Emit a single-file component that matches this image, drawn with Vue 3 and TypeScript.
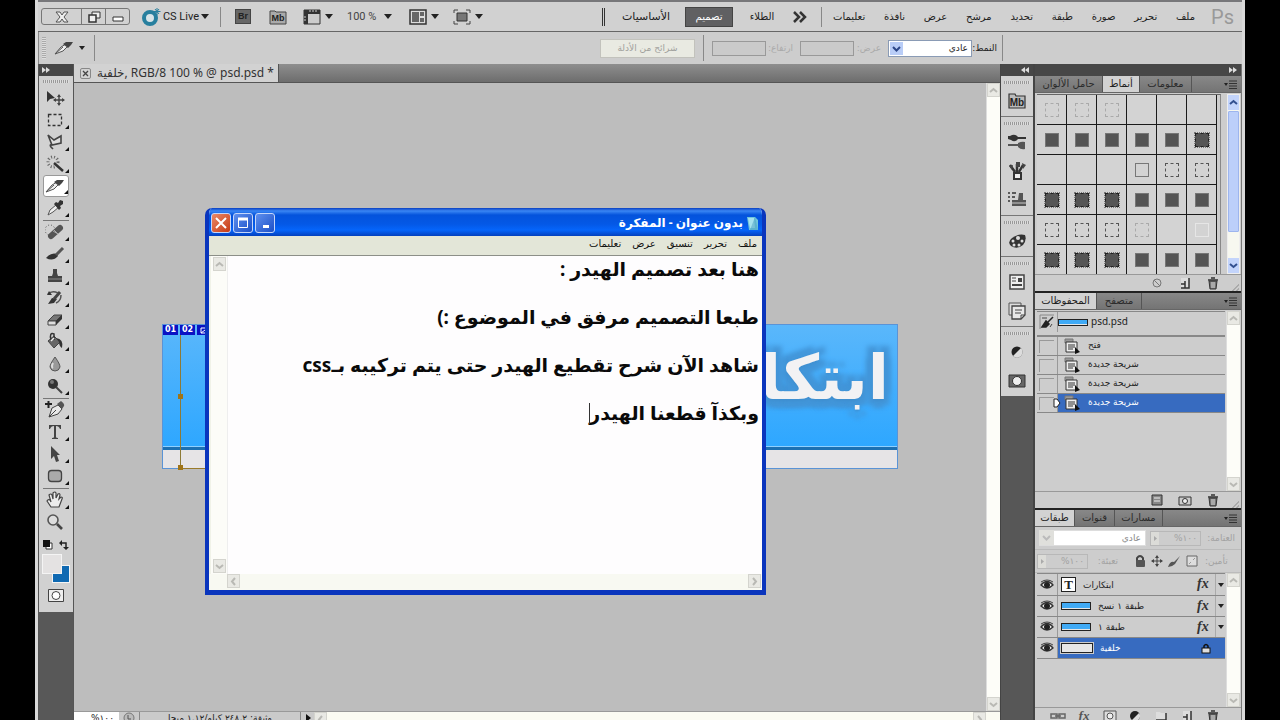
<script setup lang="ts">
import { ref } from 'vue'

interface Tool { id: string; label: string; art: string; plain?: boolean }
interface Layer { name: string; thumb: 'type' | 'blue' | 'blank'; locked?: boolean }

const menus = ['ملف', 'تحرير', 'صورة', 'طبقة', 'تحديد', 'مرشح', 'عرض', 'نافذة', 'تعليمات']
const padMenus = ['ملف', 'تحرير', 'تنسيق', 'عرض', 'تعليمات']

const slice = '<path d="M1 16 7 9 12 6 14 8 9 13Z" fill="#eee" stroke="#555"/><path d="M9 6 12 4 19 4 17 7 14 10Z" fill="#444"/><path d="M1 16 9 9" stroke="#555"/>'

const toolGroups: Tool[][] = [
  [
    { id: 'move', label: 'تحريك', plain: true, art: '<path d="M2 3V14L5 11 10 10Z" fill="#333"/><path d="M14 7v10M9 12h10" stroke="#444" stroke-width="1.4"/><path d="M14 6l2 3h-4zM14 18l2-3h-4zM8 12l3-2v4zM20 12l-3-2v4z" fill="#444"/>' },
    { id: 'marquee', label: 'تحديد مستطيل', art: '<rect x="3.500" y="4.500" width="13" height="11" fill="none" stroke="#333" stroke-dasharray="3 2" stroke-width="1.300"/>' },
    { id: 'lasso', label: 'لاسو', art: '<path d="M3 3 9 8 16 4 16 11 7 13Z" fill="#ddd" stroke="#444" stroke-width="1.600"/><path d="M7 13q-3-1-1 2l2 2" fill="none" stroke="#444" stroke-width="1.600"/>' },
    { id: 'wand', label: 'عصا سحرية', art: '<circle cx="8" cy="8" r="5" fill="none" stroke="#666" stroke-width="3" stroke-dasharray="1 2"/><path d="M9 9 18 17" stroke="#333" stroke-width="2.500"/>' },
    { id: 'slice', label: 'شريحة', art: slice },
    { id: 'eyedropper', label: 'قطارة', art: '<path d="M3 17 5 12 11 7 14 9 8 14Z" fill="#eee" stroke="#555"/><path d="M9 6 11 4 13 5 15 2 18 3 18 6 15 8 16 10 14 12Z" fill="#333"/>' },
  ],
  [
    { id: 'heal', label: 'فرشاة المعالجة', art: '<circle cx="5" cy="8" r="5" fill="none" stroke="#555" stroke-dasharray="1 2"/><path d="M6 14 15 6" stroke="#555" stroke-width="6" stroke-linecap="round"/><path d="M8 9l5 3M9 8l4 4" stroke="#aaa"/>' },
    { id: 'brush', label: 'فرشاة', art: '<path d="M1 14Q6 8 12 10L13 12Q8 18 1 14Z" fill="#333"/><path d="M11 11 18 4" stroke="#555" stroke-width="3"/>' },
    { id: 'stamp', label: 'ختم', art: '<path d="M8 3h4v4l1 3h4v6H3v-6h4l1-3z" fill="#444"/><path d="M3 13h14" stroke="#888"/>' },
    { id: 'history', label: 'فرشاة المحفوظات', art: '<path d="M3 16 7 10 12 11 9 15Z" fill="#333"/><path d="M9 11 15 4" stroke="#444" stroke-width="3"/><path d="M3 6Q7 2 13 5M11 15q5-2 5-8" fill="none" stroke="#555" stroke-width="1.500"/><path d="M2 7l2-4 3 4z" fill="#333"/>' },
    { id: 'eraser', label: 'ممحاة', art: '<path d="M3 11 9 5H17L11 11Z" fill="#777" stroke="#444"/><path d="M3 11H11V15H3Z" fill="#ddd" stroke="#444"/><path d="M11 11 17 5V9L11 15Z" fill="#333"/>' },
    { id: 'bucket', label: 'دلو الطلاء', art: '<path d="M3 9 9 4 15 10 9 16Z" fill="#666" stroke="#444"/><path d="M6 8Q4 0 9 2V8" fill="none" stroke="#333" stroke-width="1.500"/><path d="M11 6Q19 7 17 16Q14 14 14 10Z" fill="#333"/><path d="M6 9l3-3" stroke="#eee" stroke-width="1.500"/>' },
    { id: 'blur', label: 'ضبابية', art: '<path d="M10 3Q5 10 5 13Q6 17 10 17Q14 17 15 13Q15 10 10 3Z" fill="#999" stroke="#555"/><path d="M8 9Q6 13 8 14" stroke="#ddd" fill="none" stroke-width="2"/>' },
    { id: 'burn', label: 'حرق', art: '<circle cx="8" cy="8" r="5" fill="#333"/><path d="M11 11 17 17" stroke="#444" stroke-width="2"/><circle cx="7" cy="6" r="2" fill="#777"/>' },
  ],
  [
    { id: 'pen', label: 'قلم', art: '<path d="M0 4h7M3.500 1v7" stroke="#222" stroke-width="2"/><path d="M4 17 7 8 13 5 17 9 13 14Z" fill="#e8e8e8" stroke="#444"/><path d="M4 17 11 10" stroke="#444"/><path d="M12 4 16 1Q20 4 19 6L17 9Z" fill="#555"/>' },
    { id: 'type', label: 'نص', art: '<path d="M4 3H16V7H15Q14 4 11 4V15Q11 16 13 16V17H7V16Q9 16 9 15V4Q6 4 5 7H4Z" fill="#444"/>' },
    { id: 'path', label: 'تحديد المسار', art: '<path d="M6 2V15L9 12 11 18 14 17 12 11H15Z" fill="#444"/>' },
    { id: 'shape', label: 'شكل', art: '<rect x="3.500" y="4.500" width="13" height="11" rx="3" fill="#aaa" stroke="#444" stroke-width="1.300"/>' },
  ],
  [
    { id: 'hand', label: 'يد', art: '<path d="M6 17 2 11Q3 9 5 10L6 12 4 5Q6 3 7 5L8 9V3Q10 1 11 3V8L13 4Q15 3 15 5L14 9 16 7Q18 7 17 9L14 17Z" fill="#ececec" stroke="#444" stroke-width="1.200"/>' },
    { id: 'zoom', label: 'تكبير', plain: true, art: '<circle cx="8" cy="8" r="5" fill="#ddd" stroke="#555" stroke-width="1.600"/><path d="M12 12 17 17" stroke="#444" stroke-width="2.600"/>' },
  ],
]
const activeTool = ref('slice')

const dockGroups: { id: string; art: string }[][] = [
  [{ id: 'Mini Bridge', art: '<path d="M2 3H8L9 5H18V17H2Z" fill="#bbb" stroke="#333" stroke-width="1.200"/><text x="10" y="15" text-anchor="middle" font-size="10" font-weight="bold" font-family="Liberation Sans" fill="#222">Mb</text>' }],
  [
    { id: 'فرش', art: '<path d="M1 4h2q5-3 8 1h8v2h-8q-3 4-7 1L1 7z" fill="#333"/><path d="M1 12h10v2H1zM11 11q4-2 7-1v7q-4 1-7-2z" fill="#555"/>' },
    { id: 'إعدادات الفرش', art: '<path d="M7 12h7v6H7z" fill="#eee" stroke="#333" stroke-width="2"/><path d="M8 11 3 4M10 11V3M12 11 16 4" stroke="#333" stroke-width="2.500"/><path d="M2 5l4-1-1 5zM9 1h4v5H9zM15 2l4 2-3 4z" fill="#444"/>' },
    { id: 'مصدر النسخ', art: '<path d="M1 3h2M5 3h4M1 7h2M5 7h3M1 11h2" stroke="#333" stroke-width="1.500"/><path d="M12 3h4v7h3v6H5v-6h6z" fill="#555"/><path d="M5 13h14" stroke="#ccc"/>' },
  ],
  [{ id: 'ألوان', art: '<path d="M18 4Q20 9 16 14Q10 19 4 15Q0 11 5 7Q12 2 18 4Z" fill="#333"/><g fill="#ddd"><circle cx="6" cy="10" r="1.500"/><circle cx="7" cy="14" r="1.500"/><circle cx="12" cy="14" r="1.500"/><circle cx="15" cy="10" r="1.500"/><circle cx="11" cy="7" r="2"/></g>' }],
  [
    { id: 'أنماط الأحرف', art: '<path d="M3 3H17V17H3Z" fill="#eee" stroke="#444" stroke-width="1.500"/><path d="M11 6h4v4h-4z" fill="#444"/><path d="M5 6h4M5 9h4" stroke="#444"/><path d="M5 12h10v2H5z" fill="#444"/>' },
    { id: 'ملاحظات', art: '<path d="M2 2H14V14H2Z" fill="#ddd" stroke="#555"/><path d="M5 5H18V14L14 18H5Z" fill="#e8e8e8" stroke="#444" stroke-width="1.300"/><path d="M8 9h7M8 12h6M14 18v-4h4" stroke="#444"/>' },
  ],
  [
    { id: 'تعديلات', art: '<circle cx="10" cy="10" r="5.500" fill="#222"/><path d="M14 6A5.500 5.500 0 0 1 6 14Z" fill="#ddd"/>' },
    { id: 'أقنعة', art: '<path d="M2 4H18V16H2Z" fill="#666" stroke="#333"/><circle cx="10" cy="10" r="4.500" fill="#eee" stroke="#333"/>' },
  ],
]

/* s = solid, e = frayed solid, d = dashed, f = faint dashed, o = outline, w = white outline, n = empty */
const swatchRows = ['fffnnn', 'ssssse', 'nnnodd', 'eeesss', 'dddfnw', 'eeesss'].map(r => r.split(''))

const history = ['فتح', 'شريحة جديدة', 'شريحة جديدة', 'شريحة جديدة']
const layers: Layer[] = [
  { name: 'ابتكارات', thumb: 'type' },
  { name: 'طبقة ١ نسخ', thumb: 'blue' },
  { name: 'طبقة ١', thumb: 'blue' },
  { name: 'خلفية', thumb: 'blank', locked: true },
]
const note = ref('هنا بعد تصميم الهيدر :\n\nطبعا التصميم مرفق في الموضوع :)\n\nشاهد الآن شرح تقطيع الهيدر حتى يتم تركيبه بـcss\n\nوبكذآ قطعنا الهيدر')

const trash = '<path d="M3 5h10M6 3h4" stroke="#333" stroke-width="1.500"/><path d="M4 6h8l-1 8H5z" fill="#777" stroke="#333"/><path d="M7 7v6M9 7v6" stroke="#ddd"/>'
const page = '<path d="M4 3h8v10H4z" fill="#ddd"/><path d="M12 3v10H4M4 9h4v4M8 6v5" fill="none" stroke="#333" stroke-width="1.500"/>'
const stylesFoot = ['<circle cx="8" cy="8" r="4" fill="none" stroke="#777"/><path d="M5 5l6 6" stroke="#777"/>', page, trash]
const historyFoot = [
  '<path d="M3 3h10v10H3z" fill="#888" stroke="#333"/><path d="M5 6h6M5 9h6" stroke="#eee"/>',
  '<path d="M2 5h12v8H2z" fill="#ccc" stroke="#333"/><circle cx="8" cy="9" r="2.500" fill="#eee" stroke="#333"/>',
  trash,
]
const layersFoot = [
  '<path d="M1 6h6v4H1zM9 6h6v4H9zM5 8h6" fill="none" stroke="#666" stroke-width="1.500"/>',
  '<text x="8" y="12" text-anchor="middle" font-size="13" font-style="italic" font-weight="bold" font-family="Liberation Serif" fill="#555">fx</text>',
  '<path d="M2 3h12v10H2z" fill="#ddd" stroke="#555"/><circle cx="8" cy="8" r="3" fill="#eee" stroke="#555"/>',
  '<circle cx="8" cy="8" r="5" fill="#222"/><path d="M12 5A5 5 0 0 1 5 12Z" fill="#ddd"/>',
  '<path d="M3 4h4l1 1h5v7H3z" fill="#ddd"/><path d="M13 5v7H3" fill="none" stroke="#333" stroke-width="1.500"/>',
  page,
  trash,
]
</script>

<template>
  <div class="app">
    <header class="menubar">
      <div class="winbtns">
        <button class="wb wide" aria-label="إغلاق"><svg width="14" height="12" viewBox="0 0 14 12"><path d="M1 1h4l2 3 2-3h4L9 6l4 5H9L7 8l-2 3H1l4-5z" fill="#eee" stroke="#555" /></svg></button>
        <button class="wb" aria-label="استعادة"><svg width="14" height="12" viewBox="0 0 14 12"><path d="M5 1h8v6H5z" fill="#eee" stroke="#333" /><path d="M2 4h7v7H2z" fill="#eee" stroke="#333" stroke-width="1.500" /></svg></button>
        <button class="wb" aria-label="تصغير"><svg width="14" height="12" viewBox="0 0 14 12"><path d="M2 6h10v4H2z" fill="#fff" stroke="#333" /></svg></button>
      </div>
      <button class="flat cslive">
        <svg width="20" height="20" viewBox="0 0 20 20"><circle cx="9" cy="11" r="6" fill="#d8e4e8" stroke="#277f9e" stroke-width="4" /><path d="M16 1v7M12.500 4.500h7M14 2l4 5M18 2l-4 5" stroke="#277f9e" /></svg>
        <span>CS Live</span><i class="tri" />
      </button>
      <i class="vsep" />
      <button class="flat br" aria-label="Bridge"><span>Br</span></button>
      <button class="flat mb" aria-label="Mini Bridge"><svg width="18" height="16" viewBox="0 0 18 16"><path d="M1 2h5l1 1h10v12H1z" fill="#aaa" stroke="#444" /><text x="9" y="12" text-anchor="middle" font-size="9" font-weight="bold" font-family="Liberation Sans" fill="#222">Mb</text></svg></button>
      <button class="flat pair" aria-label="عرض الإضافات"><svg width="18" height="16" viewBox="0 0 18 16"><path d="M1 1h16v14H1z" fill="#ccc" stroke="#333" /><path d="M1 1h16v4H5v10H1z" fill="#333" /><path d="M7 1v2M10 1v2M13 1v2M1 8h2M1 11h2" stroke="#ccc" /></svg><i class="tri" /></button>
      <button class="flat pair zoomval"><span dir="ltr">100 %</span><i class="tri" /></button>
      <button class="flat pair" aria-label="ترتيب المستندات"><svg width="18" height="16" viewBox="0 0 18 16"><path d="M1 1h16v14H1z" fill="#ddd" stroke="#333" stroke-width="1.500" /><path d="M3 3h7v10H3zM11 3h4v4h-4zM11 9h4v4h-4z" fill="#666" /></svg><i class="tri" /></button>
      <button class="flat pair last" aria-label="وضع الشاشة"><svg width="18" height="16" viewBox="0 0 18 16"><path d="M4 4h10v8H4z" fill="#777" stroke="#333" /><path d="M1 4V1h4M13 1h4v3M17 12v3h-4M5 15H1v-3" fill="none" stroke="#444" /></svg><i class="tri" /></button>
      <span class="grow" />
      <i class="dsep" />
      <nav class="spaces" dir="rtl">
        <button class="flat more" aria-label="المزيد"><svg width="14" height="12" viewBox="0 0 14 12"><path d="M1 1l5 5-5 5M7 1l5 5-5 5" fill="none" stroke="#333" stroke-width="2.500" /></svg></button>
        <button class="flat">الطلاء</button>
        <button class="flat on">تصميم</button>
        <button class="flat">الأساسيات</button>
      </nav>
      <i class="vsep" />
      <nav class="menus" dir="rtl"><button v-for="m in menus" :key="m" class="flat">{{ m }}</button></nav>
      <span class="ps">Ps</span>
    </header>

    <section class="options">
      <i class="grip-v" />
      <button class="flat cur" aria-label="أداة الشريحة"><svg width="20" height="20" viewBox="0 0 20 20"><g fill="none" v-html="toolGroups[0][4].art" /></svg><i class="tri small" /></button>
      <i class="vline" />
      <span class="grow" />
      <button class="guides" disabled>شرائح من الأدلة</button>
      <i class="vline" />
      <div class="field"><input id="opt-h" type="text" disabled><label for="opt-h" dir="rtl">ارتفاع:</label></div>
      <div class="field"><input id="opt-w" type="text" disabled><label for="opt-w" dir="rtl">عرض:</label></div>
      <div class="mode">
        <div class="combo">
          <select id="opt-mode" dir="rtl"><option>عادي</option></select>
          <svg class="chev" width="13" height="13" viewBox="0 0 13 13"><rect width="13" height="13" fill="#b9cdf7" /><path d="M3 5l3.500 3.500L10 5" fill="none" stroke="#2c4688" stroke-width="2" /></svg>
        </div>
        <label for="opt-mode" dir="rtl">النمط:</label>
      </div>
      <i class="vline" />
    </section>

    <main class="body">
      <aside class="tools">
        <div class="cap"><svg width="8" height="6" viewBox="0 0 8 6"><path d="M0 0l4 3-4 3zM4 0l4 3-4 3z" fill="#ddd" /></svg></div>
        <div class="toolbox">
          <i class="grip" />
          <div v-for="(g, gi) in toolGroups" :key="gi" class="tgroup">
            <button v-for="t in g" :key="t.id" class="tool" :class="{ active: activeTool === t.id, plain: t.plain }" :aria-label="t.label" @click="activeTool = t.id">
              <svg width="20" height="20" viewBox="0 0 20 20"><g fill="none" v-html="t.art" /></svg>
            </button>
          </div>
          <div class="minis">
            <svg width="10" height="10" viewBox="0 0 10 10"><path d="M3 3h6v6H3z" fill="#fff" stroke="#333" /><path d="M0 0h7v7H0z" fill="#111" /></svg>
            <svg width="10" height="10" viewBox="0 0 10 10"><path d="M2 3h5v5" fill="none" stroke="#222" stroke-width="1.500" /><path d="M0 3l3-3v6zM7 10L4 7h6z" fill="#222" /></svg>
          </div>
          <div class="colors"><i class="bgc" /><i class="fgc" /></div>
          <button class="qm" aria-label="قناع سريع"><svg width="16" height="13" viewBox="0 0 16 13"><path d="M.500 .500h15v12H.500z" fill="#eee" stroke="#444" /><circle cx="8" cy="6.500" r="4" fill="#fff" stroke="#444" /></svg></button>
        </div>
      </aside>

      <section class="doc">
        <div class="doctabs">
          <div class="doctab">
            <button class="tabx" aria-label="إغلاق"><svg width="9" height="9" viewBox="0 0 9 9"><path d="M2 2l5 5M7 2L2 7" stroke="#444" stroke-width="1.300" /></svg></button>
            <span>خلفية, RGB/8 100 % @ psd.psd *</span>
          </div>
        </div>
        <div class="stage">
          <div class="canvas">
            <div class="banner">
              <div class="sky"><span class="logo">ابتكارات</span></div>
              <div class="strip" />
              <i class="sl-line" /><i class="sl-bottom" /><i class="sl-k k1" /><i class="sl-k k2" />
              <div class="badges"><b>01</b><b>02</b><b><svg width="9" height="7" viewBox="0 0 9 7"><path d="M1 1h7v5H1zM1 6l4-3 3 2" fill="none" stroke="#fff" /></svg></b></div>
            </div>

            <div class="pad">
              <div class="padtitle">
                <button class="xp x" aria-label="إغلاق"><svg width="14" height="14" viewBox="0 0 14 14"><path d="M2 2l10 10M12 2L2 12" stroke="#fff" stroke-width="2" /></svg></button>
                <button class="xp" aria-label="تكبير"><svg width="12" height="12" viewBox="0 0 12 12"><path d="M1.500 2h9v8.500h-9z" fill="none" stroke="#fff" /><path d="M1 2h10" stroke="#fff" stroke-width="3" /></svg></button>
                <button class="xp" aria-label="تصغير"><svg width="12" height="12" viewBox="0 0 12 12"><path d="M4 9.500h6" stroke="#fff" stroke-width="3" /></svg></button>
                <h1 dir="rtl">بدون عنوان - المفكرة</h1>
                <svg width="13" height="15" viewBox="0 0 13 15"><path d="M1 1h8l3 3v10H3z" fill="#6fc5dc" /><path d="M2 2h6l1 10H4z" fill="#a6e2ee" /><path d="M9 1l3 13H4z" fill="#4a9fc0" opacity=".5" /></svg>
              </div>
              <nav class="padmenu" dir="rtl"><button v-for="m in padMenus" :key="m" class="flat">{{ m }}</button></nav>
              <div class="padbody">
                <div class="padv">
                  <i class="sbtn"><svg width="9" height="9" viewBox="0 0 9 9"><path d="M1 6l3.500-3L8 6" /></svg></i>
                  <i class="sbtn"><svg width="9" height="9" viewBox="0 0 9 9"><path d="M1 3l3.500 3L8 3" /></svg></i>
                </div>
                <div class="edit">
                  <textarea v-model="note" dir="rtl" aria-label="نص المفكرة" spellcheck="false" />
                  <i class="caret" />
                </div>
              </div>
              <div class="padh">
                <i class="sbtn"><svg width="9" height="9" viewBox="0 0 9 9"><path d="M6 1L3 4.500 6 8" /></svg></i>
                <i class="sbtn"><svg width="9" height="9" viewBox="0 0 9 9"><path d="M3 1l3 3.500L3 8" /></svg></i>
              </div>
            </div>
          </div>
          <div class="vscroll">
            <i class="sbtn"><svg width="9" height="9" viewBox="0 0 9 9"><path d="M1 6l3.500-3L8 6" /></svg></i>
            <i class="sbtn"><svg width="9" height="9" viewBox="0 0 9 9"><path d="M1 3l3.500 3L8 3" /></svg></i>
          </div>
        </div>
        <footer class="status">
          <span class="pct">%١٠٠</span>
          <i class="clock"><svg width="12" height="12" viewBox="0 0 12 12"><circle cx="6" cy="6" r="5" fill="#bbb" stroke="#777" /><path d="M5 3v4h3" fill="none" stroke="#555" /></svg></i>
          <span class="info" dir="rtl">وثيقة: ٢٤٨,٢ كيلو/١,١٢ ميجا</span>
          <i class="play"><svg width="6" height="8" viewBox="0 0 6 8"><path d="M1 0l5 4-5 4z" fill="#111" /></svg></i>
          <span class="hs"><i class="sbtn"><svg width="9" height="9" viewBox="0 0 9 9"><path d="M6 1L3 4.500 6 8" /></svg></i><i class="sbtn"><svg width="9" height="9" viewBox="0 0 9 9"><path d="M3 1l3 3.500L3 8" /></svg></i></span>
        </footer>
      </section>

      <aside class="dock">
        <div class="cap end"><svg width="8" height="6" viewBox="0 0 8 6"><path d="M4 0L0 3l4 3zM8 0L4 3l4 3z" fill="#ddd" /></svg></div>
        <div v-for="(g, gi) in dockGroups" :key="gi" class="dgroup">
          <i class="grip" />
          <button v-for="d in g" :key="d.id" class="flat" :aria-label="d.id"><svg width="20" height="20" viewBox="0 0 20 20"><g fill="none" v-html="d.art" /></svg></button>
        </div>
      </aside>

      <aside class="panels">
        <div class="cap end"><svg width="8" height="6" viewBox="0 0 8 6"><path d="M0 0l4 3-4 3zM4 0l4 3-4 3z" fill="#ddd" /></svg></div>

        <section class="panel styles">
          <div class="ptabs">
            <button>حامل الألوان</button><button class="on">أنماط</button><button>معلومات</button>
            <span class="grow" /><svg class="pm" width="13" height="9" viewBox="0 0 13 9"><path d="M0 3h4L2 6z" fill="#222" /><path d="M5 1h8M5 3.500h8M5 6h8M5 8.500h8" stroke="#333" /></svg>
          </div>
          <div class="pmain">
            <div class="grid">
              <template v-for="(row, r) in swatchRows" :key="r"><span v-for="(k, c) in row" :key="c" class="cell"><i :class="'sw ' + k" /></span></template>
            </div>
            <div class="bscroll">
              <i><svg width="9" height="9" viewBox="0 0 9 9"><path d="M1 6l3.500-3L8 6" /></svg></i>
              <b />
              <i><svg width="9" height="9" viewBox="0 0 9 9"><path d="M1 3l3.500 3L8 3" /></svg></i>
            </div>
          </div>
          <div class="pfoot"><svg v-for="(a, i) in stylesFoot" :key="i" width="16" height="16" viewBox="0 0 16 16"><g v-html="a" /></svg><i class="sizer" /></div>
        </section>

        <section class="panel hist">
          <div class="ptabs">
            <button class="on">المحفوظات</button><button>متصفح</button>
            <span class="grow" /><svg class="pm" width="13" height="9" viewBox="0 0 13 9"><path d="M0 3h4L2 6z" fill="#222" /><path d="M5 1h8M5 3.500h8M5 6h8M5 8.500h8" stroke="#333" /></svg>
          </div>
          <div class="pmain">
            <div class="list">
              <div class="snap">
                <span class="chk"><svg width="16" height="16" viewBox="0 0 16 16"><path d="M1 15V1h14" fill="none" stroke="#888" /><path d="M3 13l4-6 3 3-3 3zM9 8l5-5" fill="#222" stroke="#222" stroke-width="1.500" /><path d="M3 4h5M11 13l2-3" stroke="#444" /></svg></span>
                <i class="thumb" /><span>psd.psd</span>
              </div>
              <div v-for="(h, i) in history" :key="i" class="hrow" :class="{ sel: i === 3 }">
                <span class="chk"><i /><svg v-if="i === 3" class="mark" width="8" height="10" viewBox="0 0 8 10"><path d="M1 1h3l3 4-3 4H1z" fill="#fff" stroke="#222" /></svg></span>
                <span class="hname">
                  <svg width="16" height="16" viewBox="0 0 16 16"><path d="M1 1h8v4H1z" fill="#999" stroke="#777" /><path d="M2 4h11v10H2z" fill="#eee" stroke="#333" /><path d="M4 7h7M4 9h7M4 11h5" stroke="#333" /><path d="M11 9v7l5-2z" fill="#111" /></svg>
                  <span>{{ h }}</span>
                </span>
              </div>
            </div>
            <div class="vscroll">
              <i class="sbtn"><svg width="9" height="9" viewBox="0 0 9 9"><path d="M1 6l3.500-3L8 6" /></svg></i>
              <i class="sbtn"><svg width="9" height="9" viewBox="0 0 9 9"><path d="M1 3l3.500 3L8 3" /></svg></i>
            </div>
          </div>
          <div class="pfoot"><svg v-for="(a, i) in historyFoot" :key="i" width="16" height="16" viewBox="0 0 16 16"><g v-html="a" /></svg><i class="sizer" /></div>
        </section>

        <section class="panel lay">
          <div class="ptabs">
            <button class="on">طبقات</button><button>قنوات</button><button>مسارات</button>
            <span class="grow" /><svg class="pm" width="13" height="9" viewBox="0 0 13 9"><path d="M0 3h4L2 6z" fill="#222" /><path d="M5 1h8M5 3.500h8M5 6h8M5 8.500h8" stroke="#333" /></svg>
          </div>
          <div class="lrow blendrow">
            <div class="combo">
              <select aria-label="وضع المزج" dir="rtl" disabled><option>عادي</option></select>
              <svg class="chev" width="15" height="15" viewBox="0 0 15 15"><rect width="15" height="15" fill="#e0e0dc" /><path d="M4 6l3.500 3.500L11 6" fill="none" stroke="#bbb" stroke-width="2" /></svg>
            </div>
            <span class="num"><i><svg width="8" height="13" viewBox="0 0 8 13"><path d="M3 4v5l3-2.500z" fill="#aaa" /></svg></i><input id="opac" type="text" value="%١٠٠" disabled></span><label for="opac" dir="rtl">العتامة:</label>
          </div>
          <div class="lrow lockrow">
            <span class="num"><i><svg width="8" height="13" viewBox="0 0 8 13"><path d="M3 4v5l3-2.500z" fill="#aaa" /></svg></i><input id="fill" type="text" value="%١٠٠" disabled></span><label for="fill" dir="rtl">تعبئة:</label>
            <svg width="66" height="14" viewBox="0 0 66 14"><path d="M3 7V4q3-4 6 0v3" fill="none" stroke="#444" stroke-width="2" /><rect x="2" y="6" width="9" height="7" rx="1" fill="#555" /><path d="M23 2v10M18 7h10" stroke="#444" /><path d="M23 1l2 3h-4zM23 13l2-3h-4zM17 7l3-2v4zM29 7l-3-2v4z" fill="#444" /><path d="M34 13q2-6 6-5l6-6-5 8q-3 3-7 3z" fill="#555" /><path d="M53 2h10v10H53z" fill="#ddd" stroke="#666" /><path d="M55 10l2-2M59 6l2-2" stroke="#999" /></svg>
            <span class="lk" dir="rtl">تأمين:</span>
          </div>
          <div class="pmain">
            <div class="list">
              <div v-for="l in layers" :key="l.name" class="layer" :class="{ sel: l.locked }">
                <button class="eye" aria-label="إظهار"><svg width="14" height="12" viewBox="0 0 14 12"><path d="M1 6q6-7 12 0-6 6-12 0z" fill="#eee" stroke="#333" stroke-width="1.300" /><circle cx="7" cy="6" r="3" fill="#222" /><path d="M1 3q6-4 12 0" fill="none" stroke="#444" /></svg></button>
                <span class="lname">
                  <b v-if="l.thumb === 'type'" class="tt">T</b><i v-else class="thumb" :class="l.thumb" />
                  <span>{{ l.name }}</span>
                </span>
                <svg v-if="l.locked" class="lock" width="10" height="11" viewBox="0 0 10 11"><path d="M3 5V3q2-3 4 0v2" fill="none" stroke="#111" stroke-width="1.500" /><rect x="1" y="5" width="8" height="5" fill="#ddd" stroke="#111" /></svg>
                <template v-else><em>fx</em><span class="drop"><i class="tri small" /></span></template>
              </div>
            </div>
            <div class="vscroll">
              <i class="sbtn"><svg width="9" height="9" viewBox="0 0 9 9"><path d="M1 6l3.500-3L8 6" /></svg></i>
              <i class="sbtn"><svg width="9" height="9" viewBox="0 0 9 9"><path d="M1 3l3.500 3L8 3" /></svg></i>
            </div>
          </div>
          <div class="pfoot wide"><svg v-for="(a, i) in layersFoot" :key="i" width="16" height="16" viewBox="0 0 16 16"><g v-html="a" /></svg></div>
        </section>
      </aside>
    </main>
  </div>
</template>

<style>
html, body { background: #000; }
</style>

<style scoped>
* { box-sizing: border-box; }
.app { height: 100vh; margin: 0 35px; border: solid #d9d9d9; border-width: 0 3px; background: #cfcfcf; display: flex; flex-direction: column; overflow: hidden; font: 10px/14px "DejaVu Sans", sans-serif; color: #222; }
button, input, select, textarea { font: inherit; color: inherit; margin: 0; padding: 0; border: 0; background: none; border-radius: 0; }
svg { display: block; flex: none; }
i { display: block; font-style: normal; }
.flat { display: flex; align-items: center; justify-content: center; white-space: nowrap; }
.grow { flex: 1; }
.tri { border: solid transparent; border-width: 5px 4px 0; border-top-color: #222; }
.tri.small { border-width: 4px 3px 0; border-top-color: #222; }

.menubar { flex: none; height: 32px; display: flex; align-items: center; padding: 0 8px 0 3px; border-top: 2px solid #77777a; border-bottom: 1px solid #666; background: #d1d1d1; }
.winbtns { display: flex; border: 1px solid #777; border-radius: 3px; height: 17px; margin-right: 12px; }
.wb { width: 24px; display: flex; align-items: center; justify-content: center; border-left: 1px solid #777; }
.wb.wide { width: 39px; border-left: 0; }
.cslive { gap: 2px; font: 11px/16px Roboto, sans-serif; margin-right: 12px; width: 66px; }
.vsep { width: 1px; height: 20px; background: #888; }
.br { margin-left: 14px; }
.br span { width: 16px; height: 15px; background: #666; border: 1px solid #444; font: bold 9px/13px "Liberation Sans", sans-serif; text-align: center; }
.mb { margin: 0 16px 0 18px; }
.pair { gap: 4px; margin-right: 14px; }
.pair.zoomval { font: 11px/16px Roboto, sans-serif; color: #444; margin-right: 17px; gap: 8px; }
.pair.last { margin-right: 0; }
.dsep { width: 3px; height: 18px; border: solid #333; border-width: 0 1px; margin-right: 12px; }
.spaces { display: flex; align-items: center; margin-right: 14px; }
.spaces .flat { height: 20px; width: 48px; justify-content: center; }
.spaces .flat.more { width: 21px; justify-content: flex-start; }
.spaces .flat.on { background: #606062; color: #fff; border: 1px solid #444; margin: 0 5px 0 10px; }
.spaces .flat:last-child { width: 58px; font-size: 11px; }
.menus { display: flex; align-items: center; justify-content: space-between; width: 373px; padding-left: 11px; }
.ps { width: 39px; text-align: right; font: 20px/24px Roboto, "Liberation Sans", sans-serif; color: #999; }

.options { flex: none; height: 32px; display: flex; align-items: center; background: #cdcdcd; border-left: 1px solid #888; padding-right: 239px; }
.grip-v { width: 4px; height: 22px; margin-left: 3px; background: repeating-linear-gradient(#aaa 0 1px, #ddd 1px 2px); }
.cur { gap: 5px; margin: 0 9px 0 8px; }
.vline { width: 1px; height: 26px; background: #888; }
.guides { width: 95px; height: 19px; background: #e9eae2; border: 1px solid #c2c2bc; color: #a0a09c; margin-right: 8px; font-size: 9px; white-space: nowrap; }
.field { display: flex; align-items: center; margin-left: 7px; color: #aaa; }
.field input { width: 54px; height: 15px; border: 1px solid #999; background: #cacaca; }
.field label { width: 27px; font-size: 9px; white-space: nowrap; }
.vline + .field { margin-left: 8px; }
.mode { display: flex; align-items: center; margin-left: 7px; }
.mode label { width: 30px; padding-right: 5px; white-space: nowrap; font-size: 9px; }
.combo { position: relative; display: flex; }
.combo select { appearance: none; width: 84px; height: 17px; background: #fff; border: 1px solid #8a9bb5; padding: 0 3px; font-size: 9px; line-height: 13px; }
.combo .chev { position: absolute; left: 2px; top: 2px; pointer-events: none; }

.body { flex: 1; min-height: 0; display: flex; background: #575757; }
.cap { flex: none; height: 12px; background: #474747; padding: 3px 3px 0; display: flex; }
.cap.end { justify-content: flex-end; padding-right: 4px; }
.tools { flex: none; width: 36px; border: solid #555; border-width: 0 1px; background: #585858; }
.toolbox { background: #d1d1d1; display: flex; flex-direction: column; align-items: center; padding: 4px 0 10px; }
.grip { width: 26px; height: 3px; background: repeating-linear-gradient(90deg, #999 0 1px, #ddd 1px 2px); }
.toolbox > .grip { margin-bottom: 4px; }
.tgroup + .tgroup { border-top: 1px solid #777; margin-top: 1px; }
.tgroup { width: 26px; }
.tool { position: relative; width: 26px; height: 22px; display: flex; align-items: center; padding-left: 2px; }
.tool::after { content: ""; position: absolute; right: 0; bottom: 2px; border: solid transparent; border-width: 0 0 4px 4px; border-bottom-color: #111; }
.tool.plain::after { display: none; }
.tool.active { background: #fff; border: 1px solid #999; border-radius: 3px; padding-left: 1px; }
.minis { width: 26px; display: flex; justify-content: space-between; margin: 7px 0 4px; }
.colors { position: relative; width: 28px; height: 30px; }
.colors i { position: absolute; border: 1px solid #f4f4f4; width: 18px; height: 18px; }
.colors .fgc { left: 0; top: 0; background: #e4e2e2; width: 20px; height: 20px; }
.colors .bgc { right: 0; bottom: 1px; background: #0f69b2; }
.qm { margin-top: 5px; }

.doc { flex: 1; min-width: 0; display: flex; flex-direction: column; background: #bdbdbd; }
.doctabs { flex: none; height: 19px; display: flex; background: linear-gradient(#8e8e8e, #6d6d6d); border-bottom: 1px solid #555; }
.doctab { display: flex; align-items: center; gap: 6px; padding: 0 4px 0 6px; background: #d2d2d2; border-right: 1px solid #555; font: 12px/16px "Noto Sans", "DejaVu Sans", sans-serif; color: #333; white-space: nowrap; }
.tabx { width: 11px; height: 11px; border: 1px solid #888; border-radius: 2px; }
.stage { flex: 1; min-height: 0; display: flex; }
.canvas { position: relative; flex: 1; min-width: 0; overflow: hidden; }
.vscroll { flex: none; width: 14px; background: #fdfdf8; display: flex; flex-direction: column; justify-content: space-between; border-left: 1px solid #ddd; }
.sbtn { width: 13px; height: 14px; display: grid; place-items: center; background: #e9e9e4; border: 1px solid #d4d4ce; }
.sbtn path { fill: none; stroke: #b9b9b4; stroke-width: 2; }
.status { flex: none; height: 9px; overflow: hidden; display: flex; align-items: flex-start; background: #cacaca; font-size: 9px; line-height: 12px; border-top: 1px solid #999; }
.pct { width: 45px; background: #fff; text-align: right; padding-right: 5px; }
.clock { width: 20px; padding-left: 4px; }
.info { width: 162px; border: solid #888; border-width: 0 1px; text-align: center; white-space: nowrap; }
.play { width: 13px; padding: 2px 0 0 4px; }
.hs { flex: 1; display: flex; justify-content: space-between; background: #fbfbf2; padding-right: 14px; }

.banner { position: absolute; left: 88px; top: 241px; width: 736px; height: 145px; border: 1px solid #5a93d6; display: flex; flex-direction: column; background: #e6e4e6; }
.sky { position: relative; height: 122px; background: linear-gradient(#5ab7fb, #2ea7ff); overflow: hidden; display: flex; justify-content: flex-end; padding-right: 8px; border-bottom: 1px solid #8fd0ff; }
.strip { height: 3px; background: #1c70b2; }
.logo { direction: rtl; font: bold 62px/106px "DejaVu Sans", sans-serif; color: #f2f2f4; text-shadow: 0 2px 3px #3f8fd0, 6px 6px 5px #4396d9, -6px 6px 5px #4396d9, 6px -6px 5px #4396d9, -6px -6px 5px #4396d9, 0 9px 5px #4396d9; white-space: nowrap; }
.badges { position: absolute; left: 0; top: 0; display: flex; gap: 2px; }
.badges b { background: #0a12c4; color: #fff; font: bold 8px/10px "DejaVu Sans", sans-serif; width: 15px; height: 10px; display: grid; place-items: center; }
.sl-line { position: absolute; left: 17px; top: 0; bottom: 0; width: 1px; background: #8d7a36; }
.sl-bottom { position: absolute; left: 17px; right: 500px; bottom: -1px; height: 1px; background: #9a7a2a; }
.sl-k { position: absolute; left: 15px; width: 5px; height: 5px; background: #a07417; }
.k1 { top: 69px; }
.k2 { bottom: -2px; }

.pad { position: absolute; left: 131px; top: 125px; width: 561px; height: 387px; border: solid #0a35bd; border-width: 0 4px 5px; border-radius: 7px 7px 0 0; background: #fefdfe; display: flex; flex-direction: column; overflow: hidden; }
.padtitle { flex: none; height: 28px; margin: 0 -4px; padding: 2px 7px 0 6px; display: flex; align-items: center; gap: 2px; background: linear-gradient(#0a3fc0, #3a86f4 3px, #0453dc 7px, #0458e6 16px, #0565fb 22px, #0340bd); }
.xp { width: 20px; height: 20px; border: 1px solid #c4d6fa; border-radius: 3px; background: linear-gradient(135deg, #5f90ee, #1b4fc8); display: grid; place-items: center; }
.xp.x { background: linear-gradient(135deg, #ea8a68, #c63a14); }
.padtitle h1 { flex: 1; margin: 0; font: bold 12px/16px "Noto Sans", "DejaVu Sans", sans-serif; color: #fff; padding-right: 1px; }
.padmenu { flex: none; height: 20px; display: flex; gap: 11px; padding: 0 5px 3px; background: #e3e6d8; border-bottom: 1px solid #8c8f88; color: #111; }
.padbody { flex: 1; min-height: 0; display: flex; }
.padv { flex: none; width: 19px; padding: 1px 1px 1px 2px; background: #fcfcf8; border-left: 2px solid #f0f2e8; border-right: 1px solid #eee; display: flex; flex-direction: column; justify-content: space-between; }
.edit { position: relative; flex: 1; }
.edit textarea { display: block; width: 100%; height: 100%; resize: none; outline: 0; overflow: hidden; padding: 1px 3px; font: bold 19px/24px "Noto Sans", "DejaVu Sans", sans-serif; color: #0a0a0a; white-space: pre; }
.caret { position: absolute; right: 172px; top: 147px; width: 1px; height: 21px; background: #333; }
.padh { flex: none; height: 16px; display: flex; justify-content: space-between; padding: 0 1px 0 18px; background: #f8f9f2; }

.dock { flex: none; width: 34px; border: solid #444; border-width: 0 1px; background: #575757; }
.dgroup { background: #d1d1d1; display: flex; flex-direction: column; align-items: center; padding: 5px 0 1px; border-bottom: 1px solid #777; }
.dgroup:last-child { border-bottom: 0; }
.dgroup .flat { height: 29px; }
.dgroup .grip { margin-bottom: 2px; }

.panels { flex: none; width: 208px; display: flex; flex-direction: column; border-left: 1px solid #444; border-right: 1px solid #777; background: #222; }
.panel { display: flex; flex-direction: column; background: #cdcdcd; }
.styles { flex: none; height: 215px; margin-bottom: 2px; }
.hist { flex: none; height: 215px; margin-bottom: 2px; }
.lay { flex: 1; min-height: 0; }
.ptabs { flex: none; height: 17px; display: flex; align-items: center; background: linear-gradient(#888, #747474); border-bottom: 1px solid #666; }
.ptabs button { height: 16px; border-right: 1px solid #555; white-space: nowrap; color: #2b2b2b; }
.ptabs button.on { background: #d2d2d2; color: #222; }
.styles .ptabs button { width: 52px; }
.styles .ptabs button:first-child { width: 68px; }
.styles .ptabs button.on { width: 37px; }
.hist .ptabs button { width: 45px; }
.hist .ptabs button.on { width: 62px; }
.lay .ptabs button { width: 40px; }
.lay .ptabs button:nth-child(3) { width: 48px; }
.pm { margin-right: 4px; }
.pmain { flex: 1; min-height: 0; display: flex; padding: 1px 1px 0 2px; }
.lay .pmain { padding-top: 0; }
.grid { flex: 1; display: grid; grid-template-columns: repeat(6, 30px); grid-auto-rows: 30px; border-top: 1px solid #666; margin-right: 6px; border-right: 1px solid #888; align-content: start; overflow: hidden; }
.cell { display: grid; place-items: center; border: solid #1b1b1b; border-width: 0 1px 1px 0; background: #d3d3d3; }
.sw { width: 14px; height: 14px; }
.sw.s { background: #555; border: 1px solid #777; }
.sw.e { background: #555; border: 1px dashed #222; outline: 1px dotted #777; }
.sw.d { border: 1px dashed #555; }
.sw.f { border: 1px dashed #aaa; }
.sw.o { border: 1px solid #777; }
.sw.w { border: 1px solid #e6e6e6; }
.bscroll { flex: none; width: 13px; display: flex; flex-direction: column; background: #f7f8f0; border: 1px solid #eee; }
.bscroll i { height: 15px; background: #c3d4fb; display: grid; place-items: center; }
.bscroll path { fill: none; stroke: #33508f; stroke-width: 2; }
.bscroll b { flex: 1; margin: 1px 0 26px; background: #bccffa; border: 1px solid #9db5ee; border-radius: 1px; }
.pmain .vscroll { width: 14px; margin-left: 1px; }
.pfoot { flex: none; height: 17px; display: flex; align-items: center; justify-content: flex-end; gap: 12px; padding-right: 2px; border-top: 1px solid #999; }
.pfoot svg:last-of-type { margin-right: -4px; }
.sizer { width: 10px; height: 10px; align-self: flex-end; background: repeating-linear-gradient(135deg, #aaa 0 1px, transparent 1px 3px); clip-path: polygon(100% 0, 100% 100%, 0 100%); }
.pfoot.wide { height: 13px; align-items: flex-start; justify-content: space-between; gap: 0; padding: 0 24px 0 15px; }

.list { flex: 1; min-width: 0; border-top: 1px solid #888; }
.snap { display: flex; align-items: center; height: 25px; padding-bottom: 3px; border-bottom: 2px solid #888; }
.snap > span:last-child { margin-left: 3px; padding-bottom: 3px; font: 10px/14px "Noto Sans", sans-serif; }
.chk { position: relative; flex: none; width: 21px; height: 100%; display: flex; align-items: center; padding-left: 2px; border-right: 1px solid #999; }
.chk > i { width: 15px; height: 13px; border: solid #999; border-width: 1px 0 0 1px; }
.mark { position: absolute; right: -4px; top: 4px; }
.thumb { width: 30px; height: 7px; border: 1px solid #222; background: #40aaf5; box-shadow: inset 0 -1px #e6e6e6; }
.hrow, .layer { display: flex; height: 19px; border-bottom: 1px solid #888; }
.hname { flex: 1; display: flex; align-items: center; gap: 8px; padding-left: 6px; font-size: 9px; }
.sel .hname, .layer.sel .lname { background: #376bc0; color: #fff; }
.hname > span { padding-bottom: 3px; }

.lrow { flex: none; display: flex; align-items: center; color: #a2a2a2; font-size: 9px; border-bottom: 1px solid #bbb; padding-left: 4px; white-space: nowrap; }
.blendrow { height: 23px; }
.lockrow { height: 23px; padding-left: 2px; }
.blendrow .combo select { width: 107px; height: 16px; border: 1px solid #ddd; opacity: 1; color: #888; padding-right: 4px; }
.blendrow .combo .chev { left: 0; top: 0; }
.num { display: flex; margin-left: 4px; border: 1px solid #b8b8b8; height: 15px; }
.num i { width: 8px; background: #dcdcd8; }
.num input { width: 41px; text-align: right; padding-right: 3px; height: 13px; }
.lockrow .num { margin-left: 0; }
.lrow label { margin-left: 4px; width: 30px; }
.lockrow label { width: 26px; }
.lockrow svg[width="66"] { margin-left: 16px; }
.lk { margin-left: 5px; }
.layer { height: 21px; align-items: stretch; }
.layer:first-child { height: 22px; }
.eye { flex: none; width: 21px; border-right: 1px solid #999; display: grid; place-items: center; }
.lname { flex: 1; display: flex; align-items: center; gap: 7px; padding-left: 3px; font-size: 9px; }
.lname .thumb { height: 8px; }
.lname .blank { width: 32px; height: 10px; background: #e6e6e6; border: 1px solid #222; outline: 1px solid #ccc; box-shadow: none; }
.tt { width: 15px; height: 15px; border: 1px solid #222; background: #fff; font: bold 13px/13px "Liberation Serif", serif; text-align: center; }
.layer em { font: italic bold 14px/20px "Liberation Serif", serif; color: #333; width: 18px; }
.drop { width: 10px; border-left: 1px solid #aaa; display: grid; place-items: center; }
.layer.sel { background: #376bc0; }
.layer.sel .eye { background: #cdcdcd; }
.lock { align-self: center; margin-right: 14px; }
</style>
